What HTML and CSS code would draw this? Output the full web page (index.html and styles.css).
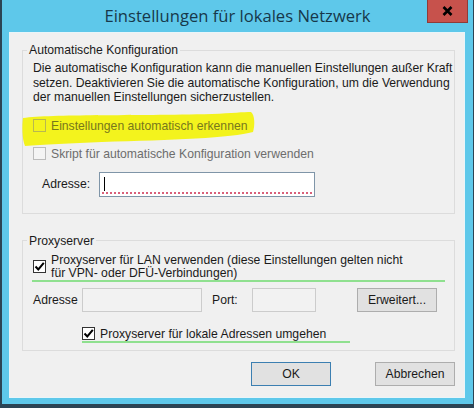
FILE: index.html
```html
<!DOCTYPE html>
<html lang="de">
<head>
<meta charset="utf-8">
<title>Einstellungen für lokales Netzwerk</title>
<link rel="stylesheet" href="styles.css">
</head>
<body>
<div class="window">
  <div class="titlebar">
    <div class="title">Einstellungen für lokales Netzwerk</div>
    <div class="close"><svg width="11" height="10" viewBox="0 0 11 10"><path d="M1.5 1 L9.5 9 M9.5 1 L1.5 9" stroke="#000" stroke-width="2.6" fill="none"/></svg></div>
  </div>
  <div class="client">
    <fieldset class="group group-auto">
      <legend>Automatische Konfiguration</legend>
      <p class="desc">Die automatische Konfiguration kann die manuellen Einstellungen außer Kraft<br>setzen. Deaktivieren Sie die automatische Konfiguration, um die Verwendung<br>der manuellen Einstellungen sicherzustellen.</p>
      <div class="cbrow highlighted">
        <svg class="marker" width="236" height="38" viewBox="0 0 236 38"><path d="M1 7 C30 3 110 5 190 3 C210 2 222 1 229 1 C233 4 233 15 231 21 C210 27 150 29 80 31 C50 32 20 34 3 35 C0 28 0 14 1 7 Z" fill="#f3f31d"/></svg>
        <span class="cb cb-hl"></span><span class="cbtext hl-text">Einstellungen automatisch erkennen</span>
      </div>
      <div class="cbrow row-skript">
        <span class="cb cb-disabled"></span><span class="cbtext disabled">Skript für automatische Konfiguration verwenden</span>
      </div>
      <div class="addr-row">
        <span class="addr-label">Adresse:</span>
        <div class="textbox focused"><span class="caret"></span></div>
      </div>
    </fieldset>

    <fieldset class="group group-proxy">
      <legend>Proxyserver</legend>
      <div class="cbrow proxy-lan underlined">
        <span class="cb"><svg width="11" height="11" viewBox="0 0 11 11"><path d="M1.5 5.5 L4.3 8.5 L9.8 1.8" stroke="#000" stroke-width="2" fill="none"/></svg></span>
        <span class="cbtext">Proxyserver für LAN verwenden (diese Einstellungen gelten nicht<br>für VPN- oder DFÜ-Verbindungen)</span>
      </div>
      <div class="proxy-fields">
        <span class="pf-label">Adresse</span>
        <div class="textbox disabled-box addr-box"></div>
        <span class="pf-label port-label">Port:</span>
        <div class="textbox disabled-box port-box"></div>
        <button class="btn btn-advanced">Erweitert...</button>
      </div>
      <div class="cbrow bypass underlined">
        <span class="cb"><svg width="11" height="11" viewBox="0 0 11 11"><path d="M1.5 5.5 L4.3 8.5 L9.8 1.8" stroke="#000" stroke-width="2" fill="none"/></svg></span>
        <span class="cbtext">Proxyserver für lokale Adressen umgehen</span>
      </div>
    </fieldset>

    <div class="buttons">
      <button class="btn btn-default">OK</button>
      <button class="btn">Abbrechen</button>
    </div>
  </div>
</div>
</body>
</html>
```
FILE: styles.css
```css
* { box-sizing: border-box; }
body {
  margin: 0;
  font-family: "Liberation Sans", Arial, sans-serif;
  font-size: 12.2px;
  color: #1a1a1a;
}
.window {
  width: 474px;
  height: 408px;
  background: #5ec8ea;
  border-left: 2px solid #2b4454;
  border-right: 1px solid #2b4454;
  border-bottom: 4px solid #2b4454;
  display: flex;
  flex-direction: column;
}
.titlebar {
  height: 32px;
  flex: none;
  display: flex;
  align-items: center;
  justify-content: center;
  position: relative;
}
.title {
  font-family: "Open Sans", "Noto Sans", sans-serif;
  font-size: 16.6px;
  color: #17384a;
  margin-top: -2px;
}
.close {
  position: absolute;
  top: 0;
  right: 5px;
  width: 41px;
  height: 23px;
  background: #c7524c;
  border: 1px solid #8f3b38;
  border-top: none;
  display: flex;
  align-items: center;
  justify-content: center;
}
.client {
  flex: 1;
  margin: 0 8px 6px 7px;
  background: #f0f0f0;
  border: 1px solid #e9f5f9;
  display: flex;
  flex-direction: column;
}
.group {
  margin: 0 9px 0 12px;
  padding: 0 10px;
  border: 1px solid #dcdcdc;
  min-width: 0;
}
.group legend {
  padding: 0 2px;
  margin-left: -6px;
  line-height: 14px;
}
.group-auto { margin-top: 10px; padding-bottom: 16px; }
.group-proxy { margin-top: 20px; padding-bottom: 7px; }
.desc {
  margin: 4px 0 0;
  line-height: 14.5px;
  white-space: nowrap;
}
.cbrow {
  display: flex;
  align-items: center;
  line-height: 14px;
  position: relative;
}
.cb {
  width: 13px;
  height: 13px;
  flex: none;
  border: 1px solid #333;
  background: #fff;
  display: flex;
  align-items: center;
  justify-content: center;
  margin-right: 5px;
}
.cb-disabled { border-color: #bcbcbc; background: #f4f4f4; }
.cb-hl { border-color: #b8b850; background: #f3f31d; }
.disabled { color: #6d6d6d; }
.hl-text { color: #77771c; }
.highlighted { margin-top: 14px; }
.marker {
  position: absolute;
  left: -11px;
  top: -8px;
  z-index: 0;
}
.highlighted .cb, .highlighted .cbtext { position: relative; z-index: 1; }
.row-skript { margin-top: 14px; }
.addr-row {
  display: flex;
  align-items: center;
  margin-top: 11px;
}
.addr-label { margin-left: 9px; width: 57px; }
.textbox {
  height: 25px;
  background: #fff;
  border: 1px solid #abadb3;
  position: relative;
}
.focused {
  width: 216px;
  border-color: #7f95a8;
  display: flex;
  align-items: center;
  padding-left: 4px;
}
.focused::after {
  content: "";
  position: absolute;
  left: 2px;
  right: 2px;
  bottom: 2px;
  border-bottom: 2px dotted #d9607a;
}
.caret {
  width: 1px;
  height: 14px;
  background: #000;
}
.proxy-lan {
  margin: 6px -1px 0;
  align-items: center;
  line-height: 13px;
  padding-left: 1px;
}
.underlined { border-bottom: 2px solid #8fe08f; }
.proxy-fields {
  display: flex;
  align-items: center;
  margin-top: 6px;
}
.pf-label { width: 49px; }
.disabled-box {
  background: #f2f2f2;
  border-color: #cccccc;
  height: 24px;
}
.addr-box { width: 120px; }
.port-label { margin-left: 10px; width: 40px; }
.port-box { width: 64px; }
.btn {
  font-family: "Liberation Sans", Arial, sans-serif;
  font-size: 12.2px;
  color: #1a1a1a;
  height: 24px;
  background: #e1e1e1;
  border: 1px solid #adadad;
  padding: 0;
}
.btn-advanced { margin-left: 41px; width: 80px; }
.bypass {
  margin: 15px 0 0 49px;
  width: 268px;
}
.buttons {
  display: flex;
  justify-content: flex-end;
  gap: 44px;
  margin: 11px 9px 0 0;
}
.buttons .btn { width: 80px; }
.btn-default { border-color: #3c7fb1; width: 79px; }
```
